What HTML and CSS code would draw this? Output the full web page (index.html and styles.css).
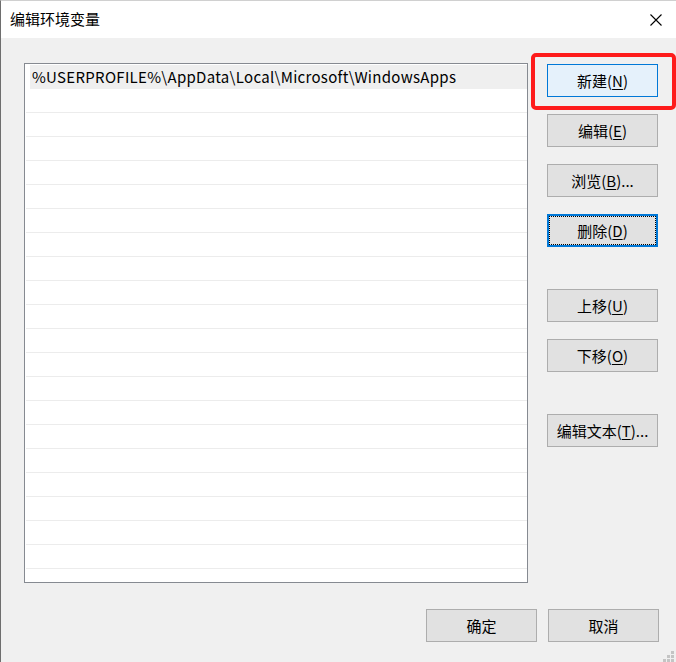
FILE: index.html
```html
<!DOCTYPE html>
<html lang="zh-CN">

<head>
	<meta charset="UTF-8">
	<meta name="viewport" content="width=device-width, initial-scale=1.0">
	<title>编辑环境变量</title>
	<link rel="stylesheet" href="styles.css">
</head>

<body>
	<div class="window">
		<!-- 标题栏 -->
		<div class="titlebar">
			<span class="title">编辑环境变量</span>
			<a class="close" href="javascript:;">
				<svg width="12" height="12" viewBox="0 0 12 12">
					<path d="M0.5 0.5 L11.5 11.5 M11.5 0.5 L0.5 11.5" stroke="#000" stroke-width="1.1" fill="none" />
				</svg>
			</a>
		</div>

		<div class="content">
			<!-- 变量列表 -->
			<ul class="list">
				<li class="selected">%USERPROFILE%\AppData\Local\Microsoft\WindowsApps</li>
				<li></li>
				<li></li>
				<li></li>
				<li></li>
				<li></li>
				<li></li>
				<li></li>
				<li></li>
				<li></li>
				<li></li>
				<li></li>
				<li></li>
				<li></li>
				<li></li>
				<li></li>
				<li></li>
				<li></li>
				<li></li>
				<li></li>
				<li></li>
				<li></li>
			</ul>

			<!-- 右侧按钮 -->
			<div class="side">
				<div class="btn-wrap">
					<button class="btn hot">新建(<u>N</u>)</button>
					<span class="mark"></span>
				</div>
				<button class="btn">编辑(<u>E</u>)</button>
				<button class="btn">浏览(<u>B</u>)...</button>
				<button class="btn focus">删除(<u>D</u>)</button>
				<button class="btn group">上移(<u>U</u>)</button>
				<button class="btn">下移(<u>O</u>)</button>
				<button class="btn group">编辑文本(<u>T</u>)...</button>
			</div>
		</div>

		<div class="footer">
			<button class="btn">确定</button>
			<button class="btn">取消</button>
		</div>

		<span class="grip"></span>
	</div>
</body>

</html>
```

FILE: styles.css
```css
* {
	margin: 0;
	padding: 0;
	box-sizing: border-box;
}

li {
	list-style: none;
}

body {
	width: 676px;
	height: 662px;
	overflow: hidden;
	font-family: "Noto Sans CJK SC", "Noto Sans", sans-serif;
	font-size: 15px;
	color: #000;
}

.window {
	position: relative;
	width: 676px;
	height: 662px;
	background: #f0f0f0;
	border-left: 1px solid #6e6e6e;
	border-top: 1px solid #d0d0d0;
	display: flex;
	flex-direction: column;
}

.titlebar {
	height: 37px;
	background: #fff;
	display: flex;
	align-items: center;
	justify-content: space-between;
	padding: 0 14px 0 9px;
}

.title {
	line-height: 20px;
	margin-top: -1px;
}

.close {
	display: block;
	width: 12px;
	height: 12px;
	margin-top: 1px;
}

.close svg {
	display: block;
}

.content {
	display: flex;
	padding: 25px 0 0 23px;
}

.list {
	width: 504px;
	height: 520px;
	border: 1px solid #868a91;
	background: #fff;
	padding-top: 1px;
	overflow: hidden;
}

.list li {
	height: 24px;
	margin-left: 1px;
	border-bottom: 1px solid #ececec;
	line-height: 23px;
	padding-left: 6px;
	white-space: nowrap;
	letter-spacing: 0.3px;
}

.list li.selected {
	margin-left: 5px;
	padding-left: 2px;
	background: #efefef;
	border-bottom-color: #efefef;
}

.side {
	display: flex;
	flex-direction: column;
	gap: 17px;
	margin-left: 19px;
	padding-top: 1px;
}

.btn {
	width: 111px;
	height: 33px;
	background: #e1e1e1;
	border: 1px solid #adadad;
	font-family: inherit;
	font-size: 15px;
	line-height: 20px;
	color: #000;
}

.btn u {
	text-underline-offset: 2px;
}

.btn.hot {
	background: #e5f1fb;
	border-color: #0078d7;
}

.btn.focus {
	border: 2px solid #0078d7;
	outline: 1px dotted #000;
	outline-offset: -3px;
}

.btn.group {
	margin-top: 25px;
}

.btn-wrap {
	position: relative;
	height: 33px;
}

/* 红色标注框 */
.mark {
	position: absolute;
	left: -16px;
	top: -11px;
	width: 145px;
	height: 57px;
	border: 4px solid #fe1b1b;
	border-radius: 5px;
}

.footer {
	display: flex;
	justify-content: flex-end;
	gap: 11px;
	padding: 26px 17px 0 0;
}

/* 右下角拖拽点 */
.grip {
	position: absolute;
	right: 2px;
	bottom: 0;
	width: 11px;
	height: 11px;
	background:
		linear-gradient(#c4c4c4, #c4c4c4) 8px 0 / 3px 3px no-repeat,
		linear-gradient(#c4c4c4, #c4c4c4) 4px 4px / 3px 3px no-repeat,
		linear-gradient(#c4c4c4, #c4c4c4) 8px 4px / 3px 3px no-repeat,
		linear-gradient(#c4c4c4, #c4c4c4) 0 8px / 3px 3px no-repeat,
		linear-gradient(#c4c4c4, #c4c4c4) 4px 8px / 3px 3px no-repeat,
		linear-gradient(#c4c4c4, #c4c4c4) 8px 8px / 3px 3px no-repeat;
}
```
